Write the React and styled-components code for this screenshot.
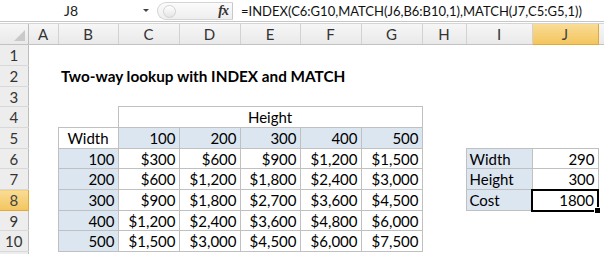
import React from 'react';
import styled, { createGlobalStyle, css } from 'styled-components';

const GlobalStyle = createGlobalStyle`
  html, body {
    margin: 0;
    padding: 0;
    background: #ffffff;
    overflow: hidden;
  }
  body {
    font-family: Lato, "Liberation Sans", sans-serif;
    color: #000;
  }
`;

const Window = styled.div`
  width: 604px;
  height: 254px;
  overflow: hidden;
  background: #fff;
`;

const FormulaBar = styled.div`
  display: flex;
  align-items: stretch;
  height: 21px;
  border-bottom: 1px solid #c6c6c6;
  background: #fff;
`;

const NameBox = styled.div`
  position: relative;
  flex: 0 0 154px;
  display: flex;
  align-items: center;
  justify-content: center;
  font-size: 14px;
  color: #222;
  padding-right: 12px;
  box-sizing: border-box;
`;

const DropArrow = styled.span`
  position: absolute;
  right: 5px;
  top: 9px;
  width: 0;
  height: 0;
  border-left: 3px solid transparent;
  border-right: 3px solid transparent;
  border-top: 3px solid #444;
`;

const FxPill = styled.div`
  flex: 0 0 76px;
  display: flex;
  align-items: center;
  justify-content: space-between;
  margin: 2px 0 1px 3px;
  padding: 0 4px 0 5px;
  box-sizing: border-box;
  border: 1px solid #d4d4d4;
  border-right: 1px solid #c8c8c8;
  border-radius: 9px 0 0 9px;
  background: linear-gradient(#fbfbfb, #eeeeee);
`;

const Knob = styled.span`
  width: 11px;
  height: 11px;
  border-radius: 50%;
  border: 1px solid #d2d2d2;
  background: linear-gradient(#ffffff, #e4e4e4);
`;

const Fx = styled.span`
  font-family: "Liberation Serif", serif;
  font-style: italic;
  font-weight: bold;
  font-size: 14px;
  color: #333;
  letter-spacing: -1px;
`;

const FormulaText = styled.div`
  flex: 1;
  min-width: 0;
  overflow: hidden;
  display: flex;
  align-items: center;
  padding-left: 8px;
  font-size: 13px;
  color: #111;
  white-space: nowrap;
`;

const Gap = styled.div`
  height: 1px;
  background: #fff;
  border-bottom: 1px solid #d5d5d5;
`;

const Sheet = styled.table`
  border-collapse: collapse;
  table-layout: fixed;
  width: 640px;
  font-size: 15px;
`;

const ColHead = styled.th`
  height: 20px;
  padding: 0;
  font-weight: normal;
  font-size: 15px;
  color: #333;
  text-align: center;
  border-right: 1px solid #d2d2d2;
  border-bottom: 1px solid #c2c2c2;
  background: linear-gradient(#f6f6f6, #e9e9e9);
  ${p => p.active && css`
    background: linear-gradient(#f9dc96, #f3c55e);
    border-right: 1px solid #e3a83a;
    border-bottom: 1px solid #e3a83a;
    color: #444;
  `}
`;

const Corner = styled(ColHead)`
  position: relative;
  border-right: 1px solid #bdbdbd;
  &::after {
    content: '';
    position: absolute;
    right: 3px;
    bottom: 3px;
    width: 0;
    height: 0;
    border-left: 11px solid transparent;
    border-bottom: 11px solid #c9c9c9;
  }
`;

const RowHead = styled.th`
  padding: 0;
  font-weight: normal;
  font-size: 15px;
  color: #333;
  text-align: center;
  border-right: 1px solid #bdbdbd;
  border-bottom: 1px solid #d8d8d8;
  background: #ededed;
  ${p => p.active && css`
    background: linear-gradient(#f9dc96, #f3c55e);
    border-bottom: 1px solid #e3a83a;
    border-right: 1px solid #e3a83a;
    color: #444;
  `}
`;

const Row = styled.tr`
  height: ${p => p.h}px;
`;

const Cell = styled.td`
  padding: 0 3px;
  white-space: nowrap;
  overflow: visible;
  text-align: ${p => p.align || 'left'};
  background: ${p => (p.fill ? '#dce6f1' : 'transparent')};
  font-weight: ${p => (p.bold ? 'bold' : 'normal')};
  ${p => p.boxed && css`
    border: 1px solid #c0c0c0;
  `}
  ${p => p.selected && css`
    position: relative;
    border: 2px solid #000;
  `}
`;

const Title = styled(Cell)`
  font-size: 15.3px;
`;

const Handle = styled.span`
  position: absolute;
  right: -4px;
  bottom: -4px;
  width: 5px;
  height: 5px;
  background: #000;
  border: 1px solid #fff;
`;

const cols = ['A', 'B', 'C', 'D', 'E', 'F', 'G', 'H', 'I', 'J', ''];
const widths = [28, 30, 60, 61, 61, 60, 61, 61, 44, 66, 66, 42];
const heights = [21, 21, 20, 21, 21, 20, 21, 21, 20, 21];

const sizes = [100, 200, 300, 400, 500];
const money = n => '$' + n.toLocaleString('en-US');

const inputs = {
  6: ['Width', '290'],
  7: ['Height', '300'],
  8: ['Cost', '1800'],
};

function renderRow(r) {
  if (r === 2) {
    return [
      <Cell key="a" />,
      <Title key="b" colSpan={9} bold>Two-way lookup with INDEX and MATCH</Title>,
    ];
  }
  if (r === 4) {
    return [
      <Cell key="a" />,
      <Cell key="b" />,
      <Cell key="h" colSpan={5} boxed align="center">Height</Cell>,
      <Cell key="i" colSpan={4} />,
    ];
  }
  if (r === 5) {
    return [
      <Cell key="a" />,
      <Cell key="b" boxed align="center">Width</Cell>,
      ...sizes.map(s => <Cell key={s} boxed fill align="right">{s}</Cell>),
      <Cell key="i" colSpan={4} />,
    ];
  }
  if (r >= 6 && r <= 10) {
    const w = sizes[r - 6];
    const inp = inputs[r];
    return [
      <Cell key="a" />,
      <Cell key="b" boxed fill align="right">{w}</Cell>,
      ...sizes.map(s => <Cell key={s} boxed align="right">{money(w * s * 0.03)}</Cell>),
      <Cell key="h" />,
      inp ? <Cell key="i" boxed fill>{inp[0]}</Cell> : <Cell key="i" />,
      inp ? (
        <Cell key="j" boxed={r !== 8} selected={r === 8} align="right">
          {inp[1]}
          {r === 8 && <Handle />}
        </Cell>
      ) : <Cell key="j" />,
      <Cell key="k" />,
    ];
  }
  return [<Cell key="a" colSpan={11} />];
}

export default function App() {
  return (
    <Window>
      <GlobalStyle />
      <FormulaBar>
        <NameBox>
          J8
          <DropArrow />
        </NameBox>
        <FxPill>
          <Knob />
          <Fx>fx</Fx>
        </FxPill>
        <FormulaText>=INDEX(C6:G10,MATCH(J6,B6:B10,1),MATCH(J7,C5:G5,1))</FormulaText>
      </FormulaBar>
      <Gap />
      <Sheet>
        <colgroup>
          {widths.map((w, i) => <col key={i} style={{ width: w }} />)}
        </colgroup>
        <thead>
          <tr>
            <Corner />
            {cols.map((c, i) => <ColHead key={i} active={c === 'J'}>{c}</ColHead>)}
          </tr>
        </thead>
        <tbody>
          {heights.map((h, i) => {
            const r = i + 1;
            return (
              <Row key={r} h={h}>
                <RowHead active={r === 8}>{r}</RowHead>
                {renderRow(r)}
              </Row>
            );
          })}
          <Row h={21}>
            <RowHead />
            <Cell colSpan={11} />
          </Row>
        </tbody>
      </Sheet>
    </Window>
  );
}
